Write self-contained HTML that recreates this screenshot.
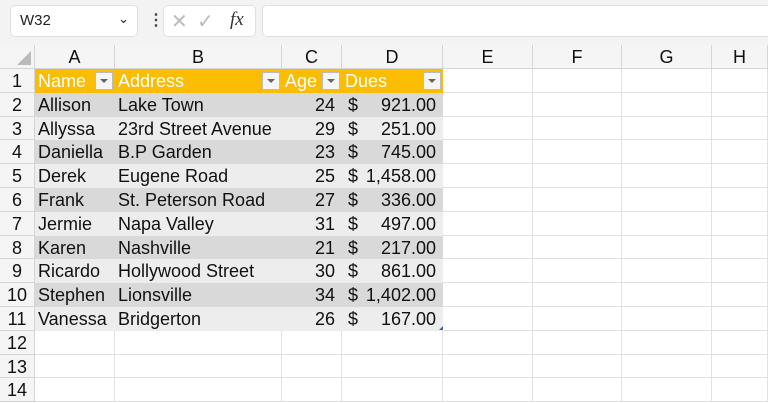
<!DOCTYPE html><html><head><style>
body{margin:0;width:768px;height:403px;overflow:hidden;background:#fff;font-family:"Liberation Sans",Arial,sans-serif;position:relative}
.top{position:absolute;left:0;top:0;width:768px;height:45px;background:#f3f3f3}
.box{position:absolute;background:#fff;border:1px solid #e0e0e0;border-radius:5px}
.g{position:absolute;left:0;top:45px;display:grid;grid-template-columns:35px 80px 167px 60px 101px 90px 89px 90px 56px;grid-template-rows:24px repeat(14,23.8px)}
.g div{border-right:1px solid #e1e1e1;border-bottom:1px solid #e1e1e1;box-sizing:border-box;font-size:18px;line-height:24px;white-space:nowrap;overflow:hidden;padding:0 3px;position:relative;color:#111}
.ch{background:#f5f5f5;text-align:center;color:#222;border-color:#d5d5d5!important}
.rh{background:#f5f5f5;text-align:center;color:#222;padding:0!important;border-color:#d5d5d5!important}
.g div.h{background:#fbbd04;color:#fff;border-right:none;border-bottom:none}
.a{background:#d9d9d9;border:none!important}
.b{background:#ededed;border:none!important}
.r{text-align:right;padding-right:7px!important}
.dd{position:absolute;right:2px;top:3px;width:18px;height:18px;background:#f5f5f5;border:1px solid #bbb;box-sizing:border-box}
.dd:after{content:"";position:absolute;left:4px;top:6px;border-left:4.5px solid transparent;border-right:4.5px solid transparent;border-top:4.5px solid #666}
.dol{position:absolute;left:6px}
</style></head><body>
<div class="top">
<div class="box" style="left:10px;top:5px;width:126px;height:30px"><span style="position:absolute;left:9px;top:6px;font-size:15px;color:#222">W32</span><span style="position:absolute;right:8px;top:5px;font-size:13px;color:#222">&#8964;</span></div>
<span style="position:absolute;left:148px;top:10px;font-size:16px;color:#444;font-weight:bold">&#8942;</span>
<div class="box" style="left:163px;top:5px;width:91px;height:30px"><span style="position:absolute;left:7px;top:3px;font-size:20px;color:#bbb">&#10005;</span><span style="position:absolute;left:33px;top:3px;font-size:20px;color:#bbb">&#10003;</span><span style="position:absolute;left:66px;top:3px;font-size:19px;font-style:italic;font-family:'Liberation Serif',serif;color:#333">fx</span></div>
<div class="box" style="left:262px;top:5px;width:520px;height:30px"></div>
</div>
<div class="g">
<div class="ch" style="position:relative"><span style="position:absolute;right:3px;bottom:3px;border-left:14px solid transparent;border-bottom:14px solid #bbb"></span></div><div class="ch">A</div><div class="ch">B</div><div class="ch">C</div><div class="ch">D</div><div class="ch">E</div><div class="ch">F</div><div class="ch">G</div><div class="ch">H</div>
<div class="rh">1</div><div class="h">Name<span class="dd"></span></div><div class="h">Address<span class="dd"></span></div><div class="h">Age<span class="dd"></span></div><div class="h">Dues<span class="dd"></span></div><div></div><div></div><div></div><div></div>
<div class="rh">2</div><div class="a">Allison</div><div class="a">Lake Town</div><div class="a r">24</div><div class="a r"><span class="dol">$</span>921.00</div><div></div><div></div><div></div><div></div>
<div class="rh">3</div><div class="b">Allyssa</div><div class="b">23rd Street Avenue</div><div class="b r">29</div><div class="b r"><span class="dol">$</span>251.00</div><div></div><div></div><div></div><div></div>
<div class="rh">4</div><div class="a">Daniella</div><div class="a">B.P Garden</div><div class="a r">23</div><div class="a r"><span class="dol">$</span>745.00</div><div></div><div></div><div></div><div></div>
<div class="rh">5</div><div class="b">Derek</div><div class="b">Eugene Road</div><div class="b r">25</div><div class="b r"><span class="dol">$</span>1,458.00</div><div></div><div></div><div></div><div></div>
<div class="rh">6</div><div class="a">Frank</div><div class="a">St. Peterson Road</div><div class="a r">27</div><div class="a r"><span class="dol">$</span>336.00</div><div></div><div></div><div></div><div></div>
<div class="rh">7</div><div class="b">Jermie</div><div class="b">Napa Valley</div><div class="b r">31</div><div class="b r"><span class="dol">$</span>497.00</div><div></div><div></div><div></div><div></div>
<div class="rh">8</div><div class="a">Karen</div><div class="a">Nashville</div><div class="a r">21</div><div class="a r"><span class="dol">$</span>217.00</div><div></div><div></div><div></div><div></div>
<div class="rh">9</div><div class="b">Ricardo</div><div class="b">Hollywood Street</div><div class="b r">30</div><div class="b r"><span class="dol">$</span>861.00</div><div></div><div></div><div></div><div></div>
<div class="rh">10</div><div class="a">Stephen</div><div class="a">Lionsville</div><div class="a r">34</div><div class="a r"><span class="dol">$</span>1,402.00</div><div></div><div></div><div></div><div></div>
<div class="rh">11</div><div class="b">Vanessa</div><div class="b">Bridgerton</div><div class="b r">26</div><div class="b r"><span class="dol">$</span>167.00<span style="position:absolute;right:0;bottom:1px;border-left:4px solid transparent;border-bottom:4px solid #3a5bb8"></span></div><div></div><div></div><div></div><div></div>
<div class="rh">12</div><div></div><div></div><div></div><div></div><div></div><div></div><div></div><div></div>
<div class="rh">13</div><div></div><div></div><div></div><div></div><div></div><div></div><div></div><div></div>
<div class="rh">14</div><div></div><div></div><div></div><div></div><div></div><div></div><div></div><div></div>
</div>
</body></html>
